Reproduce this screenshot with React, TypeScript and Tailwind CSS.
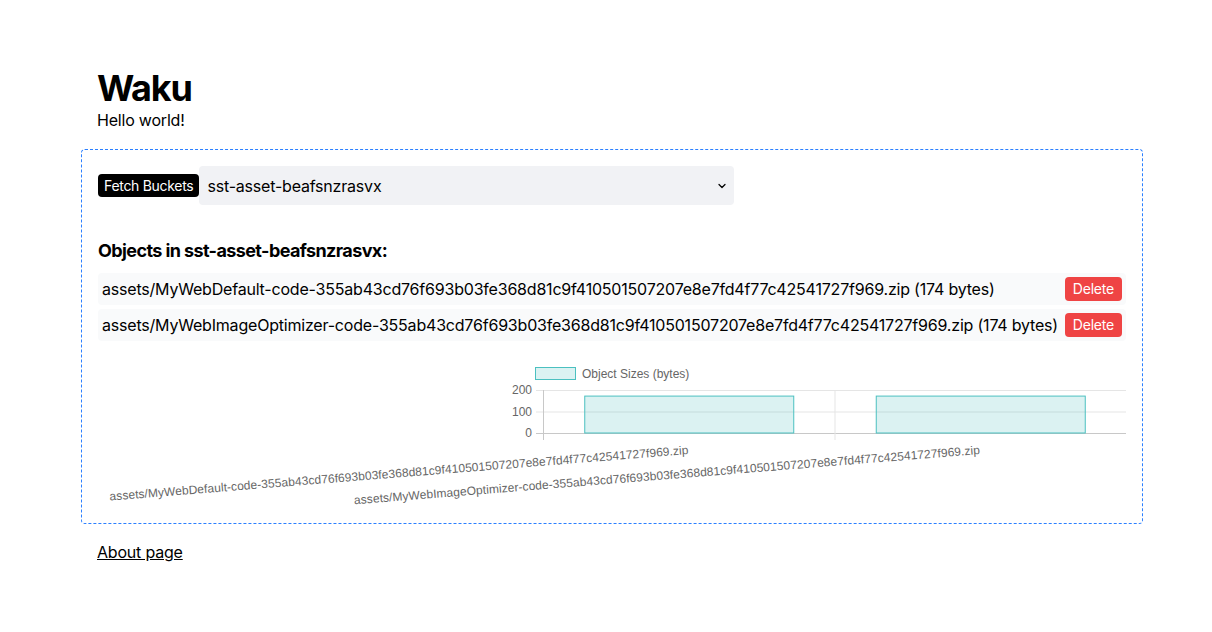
import { ChevronDown } from "lucide-react";

const objects = [
  {
    key: "assets/MyWebDefault-code-355ab43cd76f693b03fe368d81c9f410501507207e8e7fd4f77c42541727f969.zip",
    size: 174,
  },
  {
    key: "assets/MyWebImageOptimizer-code-355ab43cd76f693b03fe368d81c9f410501507207e8e7fd4f77c42541727f969.zip",
    size: 174,
  },
];

function SizeChart() {
  // plot area in svg coords
  const left = 445;
  const right = 1028;
  const top = 33;
  const bottom = 76;
  const slot = (right - left) / objects.length;
  const max = 200;

  return (
    <svg
      width="1028"
      height="151"
      className="block tracking-normal"
      style={{ fontFamily: '"Liberation Sans", Arial, sans-serif' }}
    >
      {/* legend */}
      <rect x="437.5" y="10.5" width="40" height="12" fill="rgba(75,192,192,0.2)" stroke="rgb(75,192,192)" />
      <text x="484" y="21" fontSize="12" fill="#666">Object Sizes (bytes)</text>

      {/* y axis labels + grid */}
      {[200, 100, 0].map((v) => {
        const y = bottom - (v / max) * (bottom - top);
        return (
          <g key={v}>
            <line x1={left - 7} x2={right} y1={y + 0.5} y2={y + 0.5} stroke={v === 0 ? "#c8c8c8" : "#e5e5e5"} />
            <text x={left - 11} y={y + 4} fontSize="12" fill="#666" textAnchor="end">{v}</text>
          </g>
        );
      })}

      {/* x grid */}
      {[0, 1, 2].map((i) => (
        <line key={i} x1={left + i * slot + 0.5} x2={left + i * slot + 0.5} y1={top} y2={bottom + 7} stroke={i === 0 ? "#c8c8c8" : "#e5e5e5"} />
      ))}

      {/* bars */}
      {objects.map((o, i) => {
        const bw = 209;
        const cx = left + i * slot + slot / 2;
        const h = (o.size / max) * (bottom - top);
        return (
          <rect key={o.key} x={cx - bw / 2 + 0.5} y={bottom - h + 0.5} width={bw} height={h - 0.5} fill="rgba(75,192,192,0.2)" stroke="rgb(75,192,192)" />
        );
      })}

      {/* rotated labels */}
      {objects.map((o, i) => {
        const cx = left + i * slot + slot / 2;
        return (
          <text
            key={o.key}
            x={cx}
            y={97}
            fontSize="12"
            fill="#666"
            letterSpacing="0.07"
            textAnchor="end"
            transform={`rotate(-4.6 ${cx} 97)`}
          >
            {o.key}
          </text>
        );
      })}
    </svg>
  );
}

export default function App() {
  return (
    <div
      className="min-h-screen bg-white text-black pt-[68px] pl-[81px] tracking-[-0.2px]"
      style={{ fontFamily: 'Inter, "Noto Sans", sans-serif' }}
    >
      <div className="pl-4">
        <h1 className="text-4xl leading-10 font-bold tracking-[-1.2px]">Waku</h1>
        <p className="text-base leading-6">Hello world!</p>
      </div>

      <div className="mt-[17px] w-[1062px] rounded border border-dashed border-blue-500 px-4 pt-4 pb-[15px]">
        <div className="flex items-center">
          <button className="h-[23px] rounded-sm bg-black px-[6px] text-sm text-white tracking-[-0.3px]">Fetch Buckets</button>
          <div className="relative w-[535px]">
            <select className="h-[39px] w-full appearance-none rounded bg-[#f1f2f5] px-2 text-base outline-none">
              <option>sst-asset-beafsnzrasvx</option>
            </select>
            <ChevronDown className="pointer-events-none absolute right-[6px] top-1/2 size-[12px] -translate-y-1/2" strokeWidth={2.5} />
          </div>
        </div>

        <h2 className="mt-8 mb-2 text-lg leading-7 font-bold tracking-[-0.6px]">Objects in sst-asset-beafsnzrasvx:</h2>

        <ul className="flex flex-col gap-1">
          {objects.map((o) => (
            <li key={o.key} className="flex items-center justify-between rounded bg-[#f9fafb] p-1">
              <span className="whitespace-nowrap text-base leading-6">
                {o.key} ({o.size} bytes)
              </span>
              <button className="h-6 rounded-sm bg-[#ef4444] px-2 text-sm text-white">Delete</button>
            </li>
          ))}
        </ul>

        <div className="mt-4">
          <SizeChart />
        </div>
      </div>

      <div className="pl-4 pt-4">
        <a href="#" className="text-base leading-6 underline">About page</a>
      </div>
    </div>
  );
}
